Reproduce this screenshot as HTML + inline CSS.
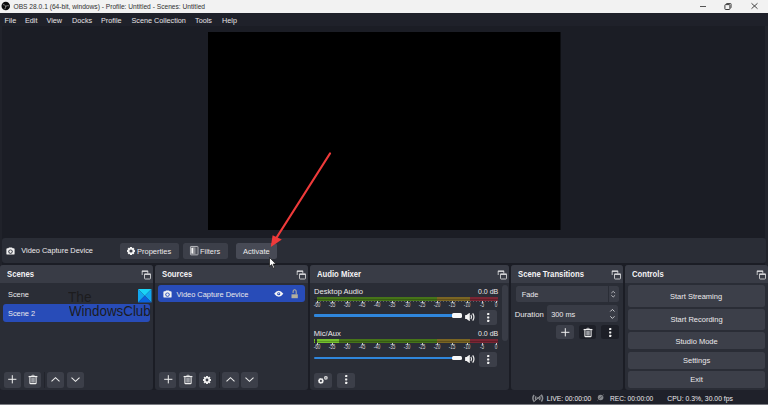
<!DOCTYPE html>
<html><head><meta charset="utf-8">
<style>
*{box-sizing:border-box;margin:0;padding:0}
html,body{width:768px;height:405px;overflow:hidden;background:#1b1d25;font-family:"Liberation Sans",sans-serif;color:#eceaec}
.a{position:absolute}
.t{position:absolute;white-space:nowrap;line-height:1}
.btn{position:absolute;background:#3c3f49;border-radius:2.5px}
.dock{position:absolute;top:265px;height:125px;background:#2a2d36;border-radius:3px}
.dtitle{position:absolute;left:0;top:0;right:0;height:17.5px;background:#393c46;border-radius:3px 3px 0 0}
.dtitle .t{top:5.4px;left:7px;font-size:8.4px;font-weight:bold;color:#f4f2f4;transform:scaleX(0.92);transform-origin:0 0}
.sel{position:absolute;background:#284cb8;border-radius:3px}
svg{position:absolute;overflow:visible}
.menu .t{top:3.9px;font-size:7.25px;color:#e6e4e6}
.lbl{font-size:7.2px;color:#d4d4d8;transform:scaleX(0.64)}
</style></head><body>
<!-- title bar -->
<div class="a" style="left:0;top:0;width:768px;height:13px;background:#f2f2f2">
  <svg style="left:0px;top:0px" width="12" height="12" viewBox="0 0 12 12"><circle cx="5.75" cy="6" r="4.25" fill="#0c0c0c"/><g fill="none" stroke="#8a8a8a" stroke-width="0.9" stroke-linecap="round"><path d="M5.8 6.2Q4.5 4.6 3.3 4.5"/><path d="M5.8 6.2Q7.3 5.2 8.6 5.7"/><path d="M5.8 6.2Q5.6 8 4.9 9"/></g></svg>
  <span class="t" style="left:13.5px;top:4.2px;font-size:6.65px;color:#303030">OBS 28.0.1 (64-bit, windows) - Profile: Untitled - Scenes: Untitled</span>
  <div class="a" style="left:700px;top:6px;width:6px;height:1px;background:#555"></div>
  <svg style="left:724px;top:3px" width="8" height="7" viewBox="0 0 8 7"><path d="M2.3 1.2V0.9Q2.3 0.5 2.8 0.5H6.6Q7.1 0.5 7.1 1V4.6Q7.1 5 6.7 5H6.4" fill="none" stroke="#3a3a3a" stroke-width="0.9"/><rect x="0.9" y="1.6" width="5" height="4.9" rx="0.7" fill="none" stroke="#3a3a3a" stroke-width="1"/></svg>
  <svg style="left:750.5px;top:3px" width="7" height="6" viewBox="0 0 7 6"><path d="M0.5 0.3L6.5 5.7M6.5 0.3L0.5 5.7" stroke="#333" stroke-width="0.9"/></svg>
</div>
<!-- menu -->
<div class="a menu" style="left:0;top:13px;width:768px;height:13px;background:#1f212a">
  <span class="t" style="left:4.5px">File</span>
  <span class="t" style="left:25px">Edit</span>
  <span class="t" style="left:46.5px">View</span>
  <span class="t" style="left:72px">Docks</span>
  <span class="t" style="left:101px">Profile</span>
  <span class="t" style="left:131.5px">Scene Collection</span>
  <span class="t" style="left:195px">Tools</span>
  <span class="t" style="left:222px">Help</span>
</div>
<!-- preview -->
<div class="a" style="left:208px;top:32px;width:352px;height:198px;background:#000"></div>
<div class="a" style="left:560px;top:32px;width:1px;height:198px;background:rgba(0,0,0,0.5)"></div>
<div class="a" style="left:765px;top:26px;width:3px;height:364px;background:#22242c"></div>
<div class="a" style="left:0;top:26px;width:2px;height:364px;background:#20222a"></div>

<!-- context bar -->
<div class="a" style="left:2px;top:238px;width:764px;height:25px;background:#2a2d36;border-radius:3px"></div>
<svg style="left:5.5px;top:246.5px" width="9" height="8" viewBox="0 0 9 8"><path d="M0.4 2.2Q0.4 1.3 1.3 1.3H2.3L3 0.4H6L6.7 1.3H7.7Q8.6 1.3 8.6 2.2V6.7Q8.6 7.6 7.7 7.6H1.3Q0.4 7.6 0.4 6.7Z" fill="#f2f2f2"/><circle cx="4.5" cy="4.6" r="2.2" fill="#2a2d36"/><circle cx="4.5" cy="4.6" r="1.3" fill="#f2f2f2"/></svg>
<span class="t" style="left:21.2px;top:247.4px;font-size:7.4px">Video Capture Device</span>
<div class="btn" style="left:120px;top:242.5px;width:59px;height:16.5px"></div>
<svg style="left:126.8px;top:246.5px" width="8" height="8" viewBox="-4 -4 8 8"><g fill="#f2f2f2"><circle r="3.25"/><rect x="-1.05" y="-3.95" width="2.1" height="7.9" rx="0.3" transform="rotate(0)"/><rect x="-1.05" y="-3.95" width="2.1" height="7.9" rx="0.3" transform="rotate(45)"/><rect x="-1.05" y="-3.95" width="2.1" height="7.9" rx="0.3" transform="rotate(90)"/><rect x="-1.05" y="-3.95" width="2.1" height="7.9" rx="0.3" transform="rotate(135)"/></g><circle r="1.6" fill="#3c3f49"/></svg>
<span class="t" style="left:137px;top:247.8px;font-size:7.5px">Properties</span>
<div class="btn" style="left:182.5px;top:242.5px;width:45px;height:16.5px"></div>
<svg style="left:189.8px;top:245.9px" width="8.4" height="9.3" viewBox="0 0 8.4 9.3"><defs><linearGradient id="fg" x1="0" x2="1" y1="0" y2="0"><stop offset="0" stop-color="#b4b4b8"/><stop offset="1" stop-color="#3a3d47"/></linearGradient></defs><rect x="0.45" y="0.45" width="7.5" height="8.4" rx="0.5" fill="none" stroke="#c4c4c8" stroke-width="0.9"/><rect x="1.3" y="1.6" width="1.9" height="6.1" fill="#f4f4f4"/><rect x="3.2" y="1.3" width="4" height="6.7" fill="url(#fg)"/></svg>
<span class="t" style="left:200px;top:247.8px;font-size:7.4px">Filters</span>
<div class="btn" style="left:236px;top:242.5px;width:41px;height:16.5px;background:#474a55"></div>
<span class="t" style="left:243px;top:247.8px;font-size:7.5px">Activate</span>

<!-- docks -->
<div class="dock" style="left:0;width:153px"><div class="dtitle"><span class="t">Scenes</span></div></div>
<div class="dock" style="left:155px;width:153px"><div class="dtitle"><span class="t">Sources</span></div></div>
<div class="dock" style="left:310px;width:199px"><div class="dtitle"><span class="t">Audio Mixer</span></div></div>
<div class="dock" style="left:511px;width:112px"><div class="dtitle"><span class="t">Scene Transitions</span></div></div>
<div class="dock" style="left:625px;width:143px"><div class="dtitle"><span class="t">Controls</span></div></div>

<!-- float icons -->
<svg id="fl" style="left:141px;top:269.5px" width="11" height="10" viewBox="0 0 11 10"><path d="M1.2 5V1.2H6.8V3.5" fill="none" stroke="#e4e4e6" stroke-width="0.8"/><rect x="0.9" y="0.6" width="6.2" height="1.1" fill="#e4e4e6"/><rect x="3.5" y="4.1" width="6" height="4.9" rx="0.7" fill="#393c46" stroke="#e4e4e6" stroke-width="0.8"/><rect x="3.2" y="3.6" width="6.6" height="1.2" fill="#e4e4e6"/></svg>
<svg style="left:296px;top:269.5px" width="11" height="10" viewBox="0 0 11 10"><path d="M1.2 5V1.2H6.8V3.5" fill="none" stroke="#e4e4e6" stroke-width="0.8"/><rect x="0.9" y="0.6" width="6.2" height="1.1" fill="#e4e4e6"/><rect x="3.5" y="4.1" width="6" height="4.9" rx="0.7" fill="#393c46" stroke="#e4e4e6" stroke-width="0.8"/><rect x="3.2" y="3.6" width="6.6" height="1.2" fill="#e4e4e6"/></svg>
<svg style="left:497px;top:269.5px" width="11" height="10" viewBox="0 0 11 10"><path d="M1.2 5V1.2H6.8V3.5" fill="none" stroke="#e4e4e6" stroke-width="0.8"/><rect x="0.9" y="0.6" width="6.2" height="1.1" fill="#e4e4e6"/><rect x="3.5" y="4.1" width="6" height="4.9" rx="0.7" fill="#393c46" stroke="#e4e4e6" stroke-width="0.8"/><rect x="3.2" y="3.6" width="6.6" height="1.2" fill="#e4e4e6"/></svg>
<svg style="left:611px;top:269.5px" width="11" height="10" viewBox="0 0 11 10"><path d="M1.2 5V1.2H6.8V3.5" fill="none" stroke="#e4e4e6" stroke-width="0.8"/><rect x="0.9" y="0.6" width="6.2" height="1.1" fill="#e4e4e6"/><rect x="3.5" y="4.1" width="6" height="4.9" rx="0.7" fill="#393c46" stroke="#e4e4e6" stroke-width="0.8"/><rect x="3.2" y="3.6" width="6.6" height="1.2" fill="#e4e4e6"/></svg>
<svg style="left:756px;top:269.5px" width="11" height="10" viewBox="0 0 11 10"><path d="M1.2 5V1.2H6.8V3.5" fill="none" stroke="#e4e4e6" stroke-width="0.8"/><rect x="0.9" y="0.6" width="6.2" height="1.1" fill="#e4e4e6"/><rect x="3.5" y="4.1" width="6" height="4.9" rx="0.7" fill="#393c46" stroke="#e4e4e6" stroke-width="0.8"/><rect x="3.2" y="3.6" width="6.6" height="1.2" fill="#e4e4e6"/></svg>

<!-- SCENES content -->
<span class="t" style="left:8px;top:291px;font-size:7.4px">Scene</span>
<div class="sel" style="left:3px;top:304.1px;width:147px;height:18.2px"></div>
<span class="t" style="left:8px;top:309.8px;font-size:7.4px">Scene 2</span>
<span class="t" style="left:67.8px;top:289.9px;font-size:14.8px;color:#1c1c1e;transform:scaleX(0.92);transform-origin:0 0">The</span>
<span class="t" style="left:68.6px;top:304.4px;font-size:14px;color:#1c1c1e;transform:scaleX(0.955);transform-origin:0 0">WindowsClub</span>
<svg style="left:138px;top:289px" width="13.5" height="13.5" viewBox="0 0 12 12"><path d="M0 0H12L6 6Z" fill="#1ad4f6"/><path d="M0 0L6 6L0 12Z" fill="#12a6ef"/><path d="M12 0V12L6 6Z" fill="#12a6ef"/><path d="M0 12H12L6 6Z" fill="#0b62dd"/></svg>
<!-- scenes buttons -->
<div class="btn" style="left:4px;top:372.3px;width:17.2px;height:15.3px"></div>
<div class="btn" style="left:24px;top:372.3px;width:17.2px;height:15.3px"></div>
<div class="a" style="left:43.5px;top:372px;width:1px;height:16px;background:#22242c"></div>
<div class="btn" style="left:46.8px;top:372.3px;width:17.2px;height:15.3px"></div>
<div class="btn" style="left:66.5px;top:372.3px;width:17.2px;height:15.3px"></div>

<!-- SOURCES content -->
<div class="sel" style="left:158px;top:285.2px;width:147px;height:17px"></div>
<svg style="left:163.3px;top:289.5px" width="9" height="8" viewBox="0 0 9 8"><path d="M0.4 2.2Q0.4 1.3 1.3 1.3H2.3L3 0.4H6L6.7 1.3H7.7Q8.6 1.3 8.6 2.2V6.7Q8.6 7.6 7.7 7.6H1.3Q0.4 7.6 0.4 6.7Z" fill="#f2f2f2"/><circle cx="4.5" cy="4.6" r="2.2" fill="#284cb8"/><circle cx="4.5" cy="4.6" r="1.3" fill="#f2f2f2"/></svg>
<span class="t" style="left:176.5px;top:290.7px;font-size:7.4px">Video Capture Device</span>
<svg style="left:273.5px;top:290px" width="9.5" height="7.5" viewBox="0 0 9.5 7.5"><path d="M0.2 3.75Q4.75 -2.4 9.3 3.75Q4.75 9.9 0.2 3.75Z" fill="#f6f6f6"/><circle cx="4.75" cy="3.75" r="1.55" fill="#284cb8"/><circle cx="4.75" cy="3.6" r="0.6" fill="#f6f6f6"/></svg>
<svg style="left:290.8px;top:288.8px" width="8" height="10" viewBox="0 0 8 10"><path d="M2.1 4.1V2.8Q2.1 0.8 3.65 0.8Q5.2 0.8 5.2 2.8V5.4" fill="none" stroke="#b3af9e" stroke-width="1.05"/><rect x="0.5" y="5.3" width="6.3" height="3.9" fill="#b3af9e"/></svg>
<!-- sources buttons -->
<div class="btn" style="left:159.2px;top:372.3px;width:17.2px;height:15.3px"></div>
<div class="btn" style="left:179px;top:372.3px;width:17.2px;height:15.3px"></div>
<div class="btn" style="left:198.7px;top:372.3px;width:17.2px;height:15.3px"></div>
<div class="a" style="left:218.5px;top:372px;width:1px;height:16px;background:#22242c"></div>
<div class="btn" style="left:221.6px;top:372.3px;width:17.2px;height:15.3px"></div>
<div class="btn" style="left:241.2px;top:372.3px;width:17.2px;height:15.3px"></div>

<!-- AUDIO MIXER -->
<span class="t" style="left:314px;top:287.6px;font-size:7.6px">Desktop Audio</span>
<span class="t" style="left:478px;top:287.9px;font-size:7px">0.0 dB</span>
<span class="t" style="left:313.8px;top:329.8px;font-size:7.6px">Mic/Aux</span>
<span class="t" style="left:478px;top:329.8px;font-size:7px">0.0 dB</span>
<!-- meters -->
<div class="a" style="left:316.5px;top:301.2px;width:182px;height:0.9px;background:repeating-linear-gradient(90deg,#5d6068 0 1px,transparent 1px 3px)"></div>
<span class="t lbl" style="left:296.9px;width:40px;text-align:center;top:301px">-60</span>
<span class="t lbl" style="left:311.9px;width:40px;text-align:center;top:301px">-55</span>
<span class="t lbl" style="left:326.9px;width:40px;text-align:center;top:301px">-50</span>
<span class="t lbl" style="left:341.9px;width:40px;text-align:center;top:301px">-45</span>
<span class="t lbl" style="left:356.9px;width:40px;text-align:center;top:301px">-40</span>
<span class="t lbl" style="left:371.9px;width:40px;text-align:center;top:301px">-35</span>
<span class="t lbl" style="left:386.9px;width:40px;text-align:center;top:301px">-30</span>
<span class="t lbl" style="left:401.9px;width:40px;text-align:center;top:301px">-25</span>
<span class="t lbl" style="left:416.9px;width:40px;text-align:center;top:301px">-20</span>
<span class="t lbl" style="left:431.9px;width:40px;text-align:center;top:301px">-15</span>
<span class="t lbl" style="left:446.9px;width:40px;text-align:center;top:301px">-10</span>
<span class="t lbl" style="left:461.9px;width:40px;text-align:center;top:301px">-5</span>
<span class="t lbl" style="left:476.3px;width:40px;text-align:center;top:301px">0</span>
<div class="a" style="left:316.5px;top:343.5px;width:182px;height:0.9px;background:repeating-linear-gradient(90deg,#5d6068 0 1px,transparent 1px 3px)"></div>
<span class="t lbl" style="left:296.9px;width:40px;text-align:center;top:343.3px">-60</span>
<span class="t lbl" style="left:311.9px;width:40px;text-align:center;top:343.3px">-55</span>
<span class="t lbl" style="left:326.9px;width:40px;text-align:center;top:343.3px">-50</span>
<span class="t lbl" style="left:341.9px;width:40px;text-align:center;top:343.3px">-45</span>
<span class="t lbl" style="left:356.9px;width:40px;text-align:center;top:343.3px">-40</span>
<span class="t lbl" style="left:371.9px;width:40px;text-align:center;top:343.3px">-35</span>
<span class="t lbl" style="left:386.9px;width:40px;text-align:center;top:343.3px">-30</span>
<span class="t lbl" style="left:401.9px;width:40px;text-align:center;top:343.3px">-25</span>
<span class="t lbl" style="left:416.9px;width:40px;text-align:center;top:343.3px">-20</span>
<span class="t lbl" style="left:431.9px;width:40px;text-align:center;top:343.3px">-15</span>
<span class="t lbl" style="left:446.9px;width:40px;text-align:center;top:343.3px">-10</span>
<span class="t lbl" style="left:461.9px;width:40px;text-align:center;top:343.3px">-5</span>
<span class="t lbl" style="left:476.3px;width:40px;text-align:center;top:343.3px">0</span>
<div class="a" style="left:316.5px;top:296.7px;width:120.5px;height:4.2px;background:#467419"></div>
<div class="a" style="left:437.0px;top:296.7px;width:33.0px;height:4.2px;background:#7a6523"></div>
<div class="a" style="left:470.0px;top:296.7px;width:28.0px;height:4.2px;background:#7a2634"></div>
<div class="a" style="left:316.5px;top:339.0px;width:120.5px;height:4.2px;background:#467419"></div>
<div class="a" style="left:437.0px;top:339.0px;width:33.0px;height:4.2px;background:#7a6523"></div>
<div class="a" style="left:470.0px;top:339.0px;width:28.0px;height:4.2px;background:#7a2634"></div>
<div class="a" style="left:317px;top:339.0px;width:21.6px;height:1.8px;background:#74c12c"></div>
<div class="a" style="left:317px;top:341.4px;width:21.6px;height:1.8px;background:#74c12c"></div>
<div class="a" style="left:313.8px;top:339.0px;width:1.4px;height:4.2px;background:#74c12c"></div>
<div class="a" style="left:313.8px;top:298.6px;width:184.2px;height:0.5px;background:rgba(0,0,0,0.22)"></div>
<div class="a" style="left:313.8px;top:340.9px;width:184.2px;height:0.5px;background:rgba(0,0,0,0.22)"></div>
<div class="a" style="left:316.8px;top:301.0px;width:0.9px;height:2px;background:#c8c8cc"></div>
<div class="a" style="left:331.8px;top:301.0px;width:0.9px;height:2px;background:#c8c8cc"></div>
<div class="a" style="left:346.8px;top:301.0px;width:0.9px;height:2px;background:#c8c8cc"></div>
<div class="a" style="left:361.8px;top:301.0px;width:0.9px;height:2px;background:#c8c8cc"></div>
<div class="a" style="left:376.8px;top:301.0px;width:0.9px;height:2px;background:#c8c8cc"></div>
<div class="a" style="left:391.8px;top:301.0px;width:0.9px;height:2px;background:#c8c8cc"></div>
<div class="a" style="left:406.8px;top:301.0px;width:0.9px;height:2px;background:#c8c8cc"></div>
<div class="a" style="left:421.8px;top:301.0px;width:0.9px;height:2px;background:#c8c8cc"></div>
<div class="a" style="left:436.8px;top:301.0px;width:0.9px;height:2px;background:#c8c8cc"></div>
<div class="a" style="left:451.8px;top:301.0px;width:0.9px;height:2px;background:#c8c8cc"></div>
<div class="a" style="left:466.8px;top:301.0px;width:0.9px;height:2px;background:#c8c8cc"></div>
<div class="a" style="left:481.8px;top:301.0px;width:0.9px;height:2px;background:#c8c8cc"></div>
<div class="a" style="left:496.4px;top:301.0px;width:0.9px;height:2px;background:#c8c8cc"></div>
<div class="a" style="left:316.8px;top:343.3px;width:0.9px;height:2px;background:#c8c8cc"></div>
<div class="a" style="left:331.8px;top:343.3px;width:0.9px;height:2px;background:#c8c8cc"></div>
<div class="a" style="left:346.8px;top:343.3px;width:0.9px;height:2px;background:#c8c8cc"></div>
<div class="a" style="left:361.8px;top:343.3px;width:0.9px;height:2px;background:#c8c8cc"></div>
<div class="a" style="left:376.8px;top:343.3px;width:0.9px;height:2px;background:#c8c8cc"></div>
<div class="a" style="left:391.8px;top:343.3px;width:0.9px;height:2px;background:#c8c8cc"></div>
<div class="a" style="left:406.8px;top:343.3px;width:0.9px;height:2px;background:#c8c8cc"></div>
<div class="a" style="left:421.8px;top:343.3px;width:0.9px;height:2px;background:#c8c8cc"></div>
<div class="a" style="left:436.8px;top:343.3px;width:0.9px;height:2px;background:#c8c8cc"></div>
<div class="a" style="left:451.8px;top:343.3px;width:0.9px;height:2px;background:#c8c8cc"></div>
<div class="a" style="left:466.8px;top:343.3px;width:0.9px;height:2px;background:#c8c8cc"></div>
<div class="a" style="left:481.8px;top:343.3px;width:0.9px;height:2px;background:#c8c8cc"></div>
<div class="a" style="left:496.4px;top:343.3px;width:0.9px;height:2px;background:#c8c8cc"></div>
<!-- scrollbar -->
<div class="a" style="left:501.5px;top:285px;width:6px;height:56px;background:#393c46;border-radius:3px"></div>

<!-- SCENE TRANSITIONS -->
<div class="a" style="left:515.5px;top:286px;width:103px;height:15.5px;background:#393c46;border-radius:2.5px"></div>
<div class="a" style="left:607.5px;top:286px;width:1px;height:15.5px;background:#2a2d36"></div>
<span class="t" style="left:521.7px;top:290.6px;font-size:7.3px">Fade</span>
<span class="t" style="left:514.7px;top:311px;font-size:7.7px">Duration</span>
<div class="a" style="left:546.5px;top:305.3px;width:71.5px;height:16.8px;background:#393c46;border-radius:2.5px"></div>
<span class="t" style="left:551.2px;top:310.9px;font-size:7.35px">300 ms</span>
<div class="btn" style="left:556px;top:325.2px;width:18px;height:14.3px"></div>
<div class="a" style="left:578.7px;top:325.2px;width:17.6px;height:14.3px;background:#1d1f27;border-radius:2.5px"></div>
<div class="a" style="left:601px;top:325.2px;width:17.6px;height:14.3px;background:#1d1f27;border-radius:2.5px"></div>

<!-- CONTROLS -->
<div class="btn" style="left:628px;top:285.2px;width:137.2px;height:21.5px"></div>
<div class="btn" style="left:628px;top:309px;width:137.2px;height:20.7px"></div>
<div class="btn" style="left:628px;top:332.2px;width:137.2px;height:17.1px"></div>
<div class="btn" style="left:628px;top:351.5px;width:137.2px;height:17px"></div>
<div class="btn" style="left:628px;top:370.7px;width:137.2px;height:17.1px"></div>
<span class="t" style="left:670px;top:293.1px;font-size:7.5px">Start Streaming</span>
<span class="t" style="left:670.5px;top:315.8px;font-size:7.5px">Start Recording</span>

<!-- status bar -->
<div class="a" style="left:0;top:390px;width:768px;height:14px;background:#1f212a"></div>
<div class="a" style="left:0;top:404px;width:768px;height:1px;background:#7a7c82"></div>
<span class="t" style="left:546.7px;top:395.8px;font-size:6.75px">LIVE: 00:00:00</span>
<span class="t" style="left:610px;top:395.8px;font-size:6.6px">REC: 00:00:00</span>
<span class="t" style="left:667.3px;top:395.8px;font-size:6.84px">CPU: 0.3%, 30.00 fps</span>

<svg style="left:8.3px;top:375.2px" width="8.6" height="8.6" viewBox="0 0 8.6 8.6"><path d="M0.2 4.3H8.4M4.3 0.2V8.4" stroke="#f2f2f2" stroke-width="1"/></svg>
<svg style="left:27.6px;top:374.9px" width="10" height="10" viewBox="0 0 10 10"><path d="M0.6 1.6H9.4" stroke="#f0f0f0" stroke-width="1.3"/><path d="M3.6 1.2Q3.6 0.3 4.5 0.3H5.5Q6.4 0.3 6.4 1.2" fill="none" stroke="#f0f0f0" stroke-width="0.8"/><path d="M1.9 2.2V7.9Q1.9 8.6 2.6 8.6H7.4Q8.1 8.6 8.1 7.9V2.2" fill="none" stroke="#f0f0f0" stroke-width="1.05"/><rect x="3.2" y="2.9" width="3.6" height="4.7" fill="#9a9ca2"/></svg>
<svg style="left:51px;top:377.3px" width="9" height="5" viewBox="0 0 9 5"><path d="M0.5 4.4L4.5 0.6L8.5 4.4" fill="none" stroke="#ececec" stroke-width="1.05"/></svg>
<svg style="left:70.6px;top:377.3px" width="9" height="5" viewBox="0 0 9 5"><path d="M0.5 0.6L4.5 4.4L8.5 0.6" fill="none" stroke="#ececec" stroke-width="1.05"/></svg>
<svg style="left:163.5px;top:375.2px" width="8.6" height="8.6" viewBox="0 0 8.6 8.6"><path d="M0.2 4.3H8.4M4.3 0.2V8.4" stroke="#f2f2f2" stroke-width="1"/></svg>
<svg style="left:183.1px;top:374.9px" width="10" height="10" viewBox="0 0 10 10"><path d="M0.6 1.6H9.4" stroke="#f0f0f0" stroke-width="1.3"/><path d="M3.6 1.2Q3.6 0.3 4.5 0.3H5.5Q6.4 0.3 6.4 1.2" fill="none" stroke="#f0f0f0" stroke-width="0.8"/><path d="M1.9 2.2V7.9Q1.9 8.6 2.6 8.6H7.4Q8.1 8.6 8.1 7.9V2.2" fill="none" stroke="#f0f0f0" stroke-width="1.05"/><rect x="3.2" y="2.9" width="3.6" height="4.7" fill="#9a9ca2"/></svg>
<svg style="left:203.3px;top:375.9px" width="8.0" height="8.0" viewBox="-4 -4 8 8"><g fill="#f2f2f2"><circle r="3.0"/><rect x="-0.95" y="-4" width="1.9" height="8" transform="rotate(0)"/><rect x="-0.95" y="-4" width="1.9" height="8" transform="rotate(45)"/><rect x="-0.95" y="-4" width="1.9" height="8" transform="rotate(90)"/><rect x="-0.95" y="-4" width="1.9" height="8" transform="rotate(135)"/></g><circle r="1.45" fill="#3c3f49"/></svg>
<svg style="left:225.7px;top:377.3px" width="9" height="5" viewBox="0 0 9 5"><path d="M0.5 4.4L4.5 0.6L8.5 4.4" fill="none" stroke="#ececec" stroke-width="1.05"/></svg>
<svg style="left:245.3px;top:377.3px" width="9" height="5" viewBox="0 0 9 5"><path d="M0.5 0.6L4.5 4.4L8.5 0.6" fill="none" stroke="#ececec" stroke-width="1.05"/></svg>
<div class="a" style="left:314px;top:314.4px;width:140px;height:2.4px;background:#2f86dc;border-radius:1px"></div>
<div class="a" style="left:451.9px;top:313.1px;width:10.3px;height:4.9px;background:#f8f8f8;border-radius:1.5px"></div>
<svg style="left:462px;top:309.1px" width="16" height="14" viewBox="0 0 16 14"><path d="M3.1 6.5Q3.1 6 3.6 6H4.6L7.3 4Q7.8 3.7 7.8 4.3V11.7Q7.8 12.3 7.3 12L4.6 10H3.6Q3.1 10 3.1 9.5Z" fill="#f4f4f4"/><path d="M8.9 5.9Q10.2 8 8.9 10.1" fill="none" stroke="#f0f0f0" stroke-width="1.1"/><path d="M10.7 4.3Q13.2 8 10.7 11.7" fill="none" stroke="#f0f0f0" stroke-width="1.2"/></svg>
<div class="btn" style="left:479.1px;top:310.0px;width:17.8px;height:14.6px"></div>
<svg style="left:486.9px;top:312.9px" width="2.4" height="9" viewBox="0 0 2.4 9"><g fill="#f0f0f0"><rect x="0.1" y="0" width="2.2" height="2.1" rx="0.4"/><rect x="0.1" y="3.4" width="2.2" height="2.1" rx="0.4"/><rect x="0.1" y="6.8" width="2.2" height="2.1" rx="0.4"/></g></svg>
<div class="a" style="left:314px;top:356.8px;width:140px;height:2.3px;background:#2f86dc;border-radius:1px"></div>
<div class="a" style="left:451.9px;top:355.5px;width:10.3px;height:4.9px;background:#f8f8f8;border-radius:1.5px"></div>
<svg style="left:462px;top:351.3px" width="16" height="14" viewBox="0 0 16 14"><path d="M3.1 6.5Q3.1 6 3.6 6H4.6L7.3 4Q7.8 3.7 7.8 4.3V11.7Q7.8 12.3 7.3 12L4.6 10H3.6Q3.1 10 3.1 9.5Z" fill="#f4f4f4"/><path d="M8.9 5.9Q10.2 8 8.9 10.1" fill="none" stroke="#f0f0f0" stroke-width="1.1"/><path d="M10.7 4.3Q13.2 8 10.7 11.7" fill="none" stroke="#f0f0f0" stroke-width="1.2"/></svg>
<div class="btn" style="left:479.1px;top:352.2px;width:17.8px;height:14.6px"></div>
<svg style="left:486.9px;top:355.1px" width="2.4" height="9" viewBox="0 0 2.4 9"><g fill="#f0f0f0"><rect x="0.1" y="0" width="2.2" height="2.1" rx="0.4"/><rect x="0.1" y="3.4" width="2.2" height="2.1" rx="0.4"/><rect x="0.1" y="6.8" width="2.2" height="2.1" rx="0.4"/></g></svg>
<div class="btn" style="left:314.3px;top:372.5px;width:17.3px;height:15px"></div>
<div class="btn" style="left:337.2px;top:372.5px;width:17.8px;height:15px"></div>
<svg style="left:318.1px;top:377.6px" width="5.8" height="5.8" viewBox="-4 -4 8 8"><g fill="#f2f2f2"><circle r="3.0"/><rect x="-0.95" y="-4" width="1.9" height="8" transform="rotate(0)"/><rect x="-0.95" y="-4" width="1.9" height="8" transform="rotate(45)"/><rect x="-0.95" y="-4" width="1.9" height="8" transform="rotate(90)"/><rect x="-0.95" y="-4" width="1.9" height="8" transform="rotate(135)"/></g><circle r="1.45" fill="#3c3f49"/></svg>
<svg style="left:323.6px;top:375.6px" width="3.8" height="3.8" viewBox="-4 -4 8 8"><g fill="#f2f2f2"><circle r="3.0"/><rect x="-0.95" y="-4" width="1.9" height="8" transform="rotate(0)"/><rect x="-0.95" y="-4" width="1.9" height="8" transform="rotate(45)"/><rect x="-0.95" y="-4" width="1.9" height="8" transform="rotate(90)"/><rect x="-0.95" y="-4" width="1.9" height="8" transform="rotate(135)"/></g><circle r="1.45" fill="#3c3f49"/></svg>
<svg style="left:344.7px;top:375px" width="2.4" height="9" viewBox="0 0 2.4 9"><g fill="#f0f0f0"><rect x="0.1" y="0" width="2.2" height="2.1" rx="0.4"/><rect x="0.1" y="3.4" width="2.2" height="2.1" rx="0.4"/><rect x="0.1" y="6.8" width="2.2" height="2.1" rx="0.4"/></g></svg>
<svg style="left:611px;top:291px" width="4.4" height="2.4" viewBox="0 0 4.4 2.4"><path d="M0.3 2.1L2.2 0.4L4.1 2.1" fill="none" stroke="#d8d8dc" stroke-width="0.75"/></svg>
<svg style="left:611px;top:295px" width="4.4" height="2.4" viewBox="0 0 4.4 2.4"><path d="M0.3 0.3L2.2 2L4.1 0.3" fill="none" stroke="#d8d8dc" stroke-width="0.75"/></svg>
<svg style="left:609.6px;top:308.5px" width="4.8" height="2.8" viewBox="0 0 4.8 2.8"><path d="M0.3 2.5L2.4 0.4L4.5 2.5" fill="none" stroke="#e0e0e4" stroke-width="0.85"/></svg>
<svg style="left:609.6px;top:316.2px" width="4.8" height="2.8" viewBox="0 0 4.8 2.8"><path d="M0.3 0.3L2.4 2.4L4.5 0.3" fill="none" stroke="#e0e0e4" stroke-width="0.85"/></svg>
<svg style="left:560.7px;top:328.0px" width="8.6" height="8.6" viewBox="0 0 8.6 8.6"><path d="M0.2 4.3H8.4M4.3 0.2V8.4" stroke="#f2f2f2" stroke-width="1"/></svg>
<svg style="left:582.5px;top:327.8px" width="10" height="10" viewBox="0 0 10 10"><path d="M0.6 1.6H9.4" stroke="#f0f0f0" stroke-width="1.3"/><path d="M3.6 1.2Q3.6 0.3 4.5 0.3H5.5Q6.4 0.3 6.4 1.2" fill="none" stroke="#f0f0f0" stroke-width="0.8"/><path d="M1.9 2.2V7.9Q1.9 8.6 2.6 8.6H7.4Q8.1 8.6 8.1 7.9V2.2" fill="none" stroke="#f0f0f0" stroke-width="1.05"/><rect x="3.2" y="2.9" width="3.6" height="4.7" fill="#9a9ca2"/></svg>
<svg style="left:608.5999999999999px;top:327.8px" width="2.4" height="9" viewBox="0 0 2.4 9"><g fill="#f0f0f0"><rect x="0.1" y="0" width="2.2" height="2.1" rx="0.4"/><rect x="0.1" y="3.4" width="2.2" height="2.1" rx="0.4"/><rect x="0.1" y="6.8" width="2.2" height="2.1" rx="0.4"/></g></svg>
<span class="t" style="left:628px;width:137.2px;text-align:center;top:337.6px;font-size:7.5px">Studio Mode</span>
<span class="t" style="left:628px;width:137.2px;text-align:center;top:357.0px;font-size:7.5px">Settings</span>
<span class="t" style="left:628px;width:137.2px;text-align:center;top:375.9px;font-size:7.5px">Exit</span>
<svg style="left:531.5px;top:393.5px" width="11.5" height="8.5" viewBox="0 0 11.5 8.5"><g fill="none" stroke="#8c8e92" stroke-width="1.5"><path d="M2.1 1Q-0.3 4.25 2.1 7.5"/><path d="M9.4 1Q11.8 4.25 9.4 7.5"/><path d="M4 2.3Q2.8 4.25 4 6.2"/><path d="M7.5 2.3Q8.7 4.25 7.5 6.2"/></g><path d="M1.8 7.8L9.8 0.7" stroke="#8c8e92" stroke-width="1"/><circle cx="5.75" cy="4.25" r="1.1" fill="#8c8e92"/></svg>
<svg style="left:596.8px;top:394px" width="7.2" height="7" viewBox="0 0 7.2 7"><circle cx="3.6" cy="3.5" r="2.8" fill="#85878c"/><path d="M0.6 6.4L6.6 0.6" stroke="#1f212a" stroke-width="0.8"/><path d="M0.3 6.7L6.9 0.3" stroke="#85878c" stroke-width="0.5"/></svg>
<svg style="left:269px;top:257px" width="8" height="12" viewBox="0 0 8 12"><path d="M0.5 0.5V9.5L2.6 7.6L4.2 11.2L5.6 10.6L4.1 7.1H7Z" fill="#fafafa" stroke="#111" stroke-width="0.7"/></svg>
<!-- red arrow -->
<svg style="left:0;top:0" width="768" height="405" viewBox="0 0 768 405"><path d="M330 153.5L272.5 244" stroke="#ee3a3a" stroke-width="2.2" stroke-linecap="round"/><path d="M270.8 247L272.6 235.2L281.8 239.5Z" fill="#ee3a3a"/></svg>
</body></html>
